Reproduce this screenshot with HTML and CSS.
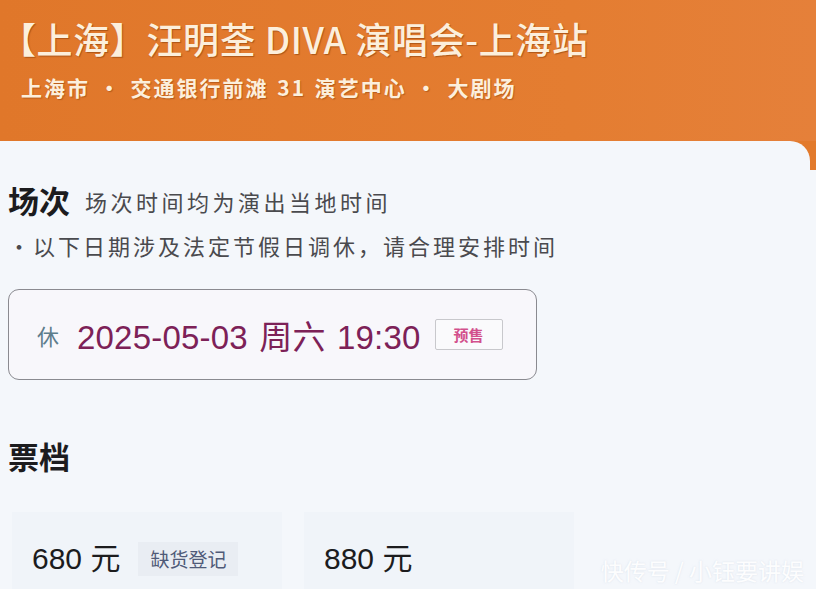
FILE: index.html
```html
<!DOCTYPE html>
<html lang="zh-CN">
<head>
	<title>汪明荃 DIVA 演唱会</title>
	<meta charset="UTF-8">
	<meta name="viewport" content="width=device-width, initial-scale=1">
	<link rel="stylesheet" href="styles.css">
</head>
<body>
	<div id="page">
		<div id="header">
			<h1>【上海】汪明荃 DIVA 演唱会-上海站</h1>
			<p class="venue">上海市 · 交通银行前滩 31 演艺中心 · 大剧场</p>
		</div>
		<div id="card">
			<div class="section-title">
				<h2>场次</h2>
				<span class="hint">场次时间均为演出当地时间</span>
			</div>
			<p class="note">•以下日期涉及法定节假日调休，请合理安排时间</p>
			<div class="session">
				<span class="rest">休</span>
				<span class="date">2025-05-03 周六 19:30</span>
				<span class="presale">预售</span>
			</div>
			<h2 class="tickets-title">票档</h2>
			<div class="prices">
				<div class="price">
					<span class="amount">680 元</span>
					<span class="soldout">缺货登记</span>
				</div>
				<div class="price">
					<span class="amount">880 元</span>
				</div>
			</div>
			<div class="watermark">快传号 / 小钰要讲娱</div>
		</div>
	</div>
</body>
</html>
```

FILE: styles.css
```css
html, body {
	margin: 0;
	height: 100%;
	overflow: hidden;
}
body {
	font-family: "Noto Sans CJK SC", "Noto Sans", sans-serif;
	background: #f4f7fb;
}
#page {
	height: 100%;
	background: linear-gradient(#e27a2c 0 170px, #f4f7fb 170px);
}
#header {
	height: 141px;
	box-sizing: border-box;
	padding: 13px 0 0 0;
	background: linear-gradient(90deg, #e0772a, #e47d31 70%, #e5803a);
	color: #fcefdc;
}
#header h1 {
	margin: 0;
	font-size: 36px;
	line-height: 50px;
	font-weight: 500;
	letter-spacing: 0.6px;
	white-space: nowrap;
	text-shadow: 1px 1px 1px rgba(120, 50, 0, 0.5);
}
#header .venue {
	margin: 10px 0 0 21px;
	font-size: 21px;
	line-height: 28px;
	font-weight: 700;
	letter-spacing: 2px;
	word-spacing: 2px;
	text-shadow: 1px 1px 1px rgba(120, 50, 0, 0.4);
}
#card {
	position: relative;
	width: 810px;
	height: 448px;
	box-sizing: border-box;
	padding: 37px 8px 0;
	background: #f4f7fb;
	border-radius: 0 20px 0 0;
}
.section-title {
	display: flex;
	align-items: center;
	gap: 15px;
}
h2 {
	margin: 0;
	font-size: 31px;
	line-height: 44px;
	font-weight: 700;
	color: #1c1c1e;
}
.hint {
	font-size: 22px;
	color: #4a4a4e;
	letter-spacing: 3.5px;
	padding-top: 2px;
}
.note {
	margin: 8px 0 0;
	font-size: 22px;
	line-height: 30px;
	color: #4a4a4e;
	letter-spacing: 3px;
}
.session {
	margin-top: 29px;
	width: 529px;
	height: 91px;
	box-sizing: border-box;
	border: 1.5px solid #8a8a90;
	border-radius: 11px;
	background: #f8f7fb;
	display: flex;
	align-items: center;
	padding-left: 28px;
}
.rest {
	font-size: 22px;
	color: #5d7d8c;
	margin-right: 18px;
}
.date {
	font-family: "Liberation Sans", "Noto Sans CJK SC", sans-serif;
	font-size: 33px;
	color: #7d2157;
	letter-spacing: 0.2px;
	word-spacing: 2px;
}
.presale {
	margin-left: 14px;
	width: 68px;
	height: 31px;
	box-sizing: border-box;
	border: 1px solid #c8c8cc;
	border-radius: 2px;
	display: flex;
	align-items: center;
	justify-content: center;
	font-size: 15px;
	font-weight: 700;
	color: #d2508c;
	background: #fafafc;
}
.tickets-title {
	margin-top: 54px;
}
.prices {
	margin-top: 34px;
	display: flex;
	gap: 22px;
	padding-left: 4px;
}
.price {
	width: 270px;
	height: 90px;
	box-sizing: border-box;
	padding: 30px 0 0 20px;
	background: #f0f4f9;
	display: flex;
	align-items: flex-start;
	gap: 18px;
}
.amount {
	font-family: "Liberation Sans", "Noto Sans CJK SC", sans-serif;
	font-size: 30px;
	line-height: 34px;
	color: #1c1c1e;
}
.soldout {
	font-size: 19px;
	line-height: 34px;
	padding: 0 12px;
	color: #4f5a78;
	background: #e9edf3;
}
.watermark {
	position: absolute;
	right: 6px;
	bottom: 2px;
	font-size: 23px;
	color: rgba(255, 255, 255, 0.95);
	text-shadow: 0 0 2px rgba(200, 210, 225, 0.6);
}
```
